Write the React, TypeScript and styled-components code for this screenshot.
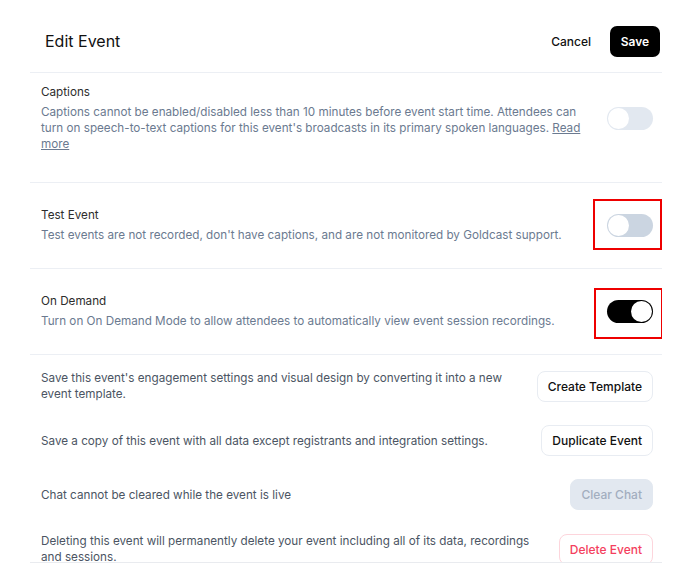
import React from 'react';
import styled, { createGlobalStyle } from 'styled-components';

const GlobalStyle = createGlobalStyle`
  body {
    margin: 0;
    background: #ffffff;
    font-family: Inter, "Noto Sans", sans-serif;
    -webkit-font-smoothing: antialiased;
  }
`;

const Page = styled.div`
  padding: 0 23px 0 30px;
`;

const Header = styled.div`
  height: 73px;
  box-sizing: border-box;
  display: flex;
  align-items: center;
  justify-content: space-between;
  padding: 10px 2px 0 15px;
  border-bottom: 1px solid #eceff4;
`;

const Title = styled.h1`
  margin: 0;
  font-size: 16px;
  font-weight: 400;
  color: #111111;
`;

const HeaderActions = styled.div`
  display: flex;
  align-items: center;
  gap: 19px;
`;

const TextButton = styled.button`
  border: none;
  background: none;
  padding: 0;
  font-family: inherit;
  font-size: 12px;
  font-weight: 500;
  color: #111111;
`;

const PrimaryButton = styled.button`
  width: 50px;
  height: 31px;
  border: none;
  border-radius: 7px;
  background: #000000;
  color: #ffffff;
  font-family: inherit;
  font-size: 12px;
  font-weight: 600;
`;

const Scroll = styled.div`
  height: 489px;
  overflow: hidden;
  border-bottom: 1px solid #e9ebef;
`;

const Section = styled.div<{ $top: number; $bottom: number }>`
  display: flex;
  align-items: center;
  gap: 24px;
  padding: ${(p) => p.$top}px 9px ${(p) => p.$bottom}px 11px;
  border-bottom: 1px solid #eceff4;
`;

const SectionText = styled.div`
  flex: 1;
`;

const SectionTitle = styled.div`
  font-size: 11.7px;
  line-height: 20px;
  color: #2d2d2d;
  margin-bottom: 2px;
`;

const Description = styled.div`
  font-size: 11.7px;
  line-height: 16px;
  color: #6b7a90;
`;

const Link = styled.a`
  color: inherit;
  text-decoration: underline;
`;

const ToggleWrap = styled.div`
  position: relative;
  display: flex;
  margin-top: 3px;
`;

const Highlight = styled.div<{ $x: number; $y: number }>`
  position: absolute;
  left: ${(p) => -14 + p.$x}px;
  right: ${(p) => -9 - p.$x}px;
  top: ${(p) => -15 + p.$y}px;
  bottom: ${(p) => -13 - p.$y}px;
  border: 2px solid #ee0000;
`;

const Track = styled.div<{ $on?: boolean; $muted?: boolean }>`
  width: 46px;
  height: 23px;
  box-sizing: border-box;
  border-radius: 12px;
  padding: 1px;
  display: flex;
  justify-content: ${(p) => (p.$on ? 'flex-end' : 'flex-start')};
  background: ${(p) => (p.$on ? '#000000' : p.$muted ? '#e2e8f0' : '#cbd5e1')};
`;

const Knob = styled.div`
  width: 21px;
  height: 21px;
  border-radius: 50%;
  background: #ffffff;
`;

const Actions = styled.div`
  display: flex;
  flex-direction: column;
  gap: 23px;
  padding: 15px 9px 0 11px;
`;

const ActionRow = styled.div`
  display: flex;
  align-items: center;
  gap: 24px;
`;

const ActionText = styled.div`
  flex: 1;
  font-size: 11.7px;
  line-height: 16px;
  color: #4b5563;
`;

const ActionButton = styled.button<{ $variant?: 'default' | 'disabled' | 'danger' }>`
  flex-shrink: 0;
  height: 31px;
  padding: 0 10px;
  border-radius: 8px;
  font-family: inherit;
  font-size: 12px;
  font-weight: 500;
  white-space: nowrap;
  border: 1px solid
    ${(p) => (p.$variant === 'danger' ? '#fdd5dc' : p.$variant === 'disabled' ? '#e2e8f0' : '#e8ecf2')};
  background: ${(p) => (p.$variant === 'disabled' ? '#e2e8f0' : '#ffffff')};
  color: ${(p) =>
    p.$variant === 'danger' ? '#f43f5e' : p.$variant === 'disabled' ? '#a3aebf' : '#111111'};
`;

function Toggle({
  on,
  muted,
  highlight,
}: {
  on?: boolean;
  muted?: boolean;
  highlight?: { x: number; y: number };
}) {
  return (
    <ToggleWrap>
      <Track $on={on} $muted={muted}>
        <Knob />
      </Track>
      {highlight && <Highlight $x={highlight.x} $y={highlight.y} />}
    </ToggleWrap>
  );
}

export default function App() {
  return (
    <Page>
      <GlobalStyle />
      <Header>
        <Title>Edit Event</Title>
        <HeaderActions>
          <TextButton>Cancel</TextButton>
          <PrimaryButton>Save</PrimaryButton>
        </HeaderActions>
      </Header>
      <Scroll>
        <Section $top={9} $bottom={30}>
          <SectionText>
            <SectionTitle>Captions</SectionTitle>
            <Description>
              Captions cannot be enabled/disabled less than 10 minutes before event start time. Attendees can
              turn on speech-to-text captions for this event's broadcasts in its primary spoken languages.{' '}
              <Link>Read more</Link>
            </Description>
          </SectionText>
          <Toggle muted />
        </Section>
        <Section $top={22} $bottom={25}>
          <SectionText>
            <SectionTitle>Test Event</SectionTitle>
            <Description>
              Test events are not recorded, don't have captions, and are not monitored by Goldcast support.
            </Description>
          </SectionText>
          <Toggle highlight={{ x: 0, y: 0 }} />
        </Section>
        <Section $top={22} $bottom={25}>
          <SectionText>
            <SectionTitle>On Demand</SectionTitle>
            <Description>
              Turn on On Demand Mode to allow attendees to automatically view event session recordings.
            </Description>
          </SectionText>
          <Toggle on highlight={{ x: 1, y: 3 }} />
        </Section>
        <Actions>
          <ActionRow>
            <ActionText>
              Save this event's engagement settings and visual design by converting it into a new event template.
            </ActionText>
            <ActionButton>Create Template</ActionButton>
          </ActionRow>
          <ActionRow>
            <ActionText>Save a copy of this event with all data except registrants and integration settings.</ActionText>
            <ActionButton>Duplicate Event</ActionButton>
          </ActionRow>
          <ActionRow>
            <ActionText>Chat cannot be cleared while the event is live</ActionText>
            <ActionButton $variant="disabled">Clear Chat</ActionButton>
          </ActionRow>
          <ActionRow>
            <ActionText>
              Deleting this event will permanently delete your event including all of its data, recordings and
              sessions.
            </ActionText>
            <ActionButton $variant="danger">Delete Event</ActionButton>
          </ActionRow>
        </Actions>
      </Scroll>
    </Page>
  );
}
